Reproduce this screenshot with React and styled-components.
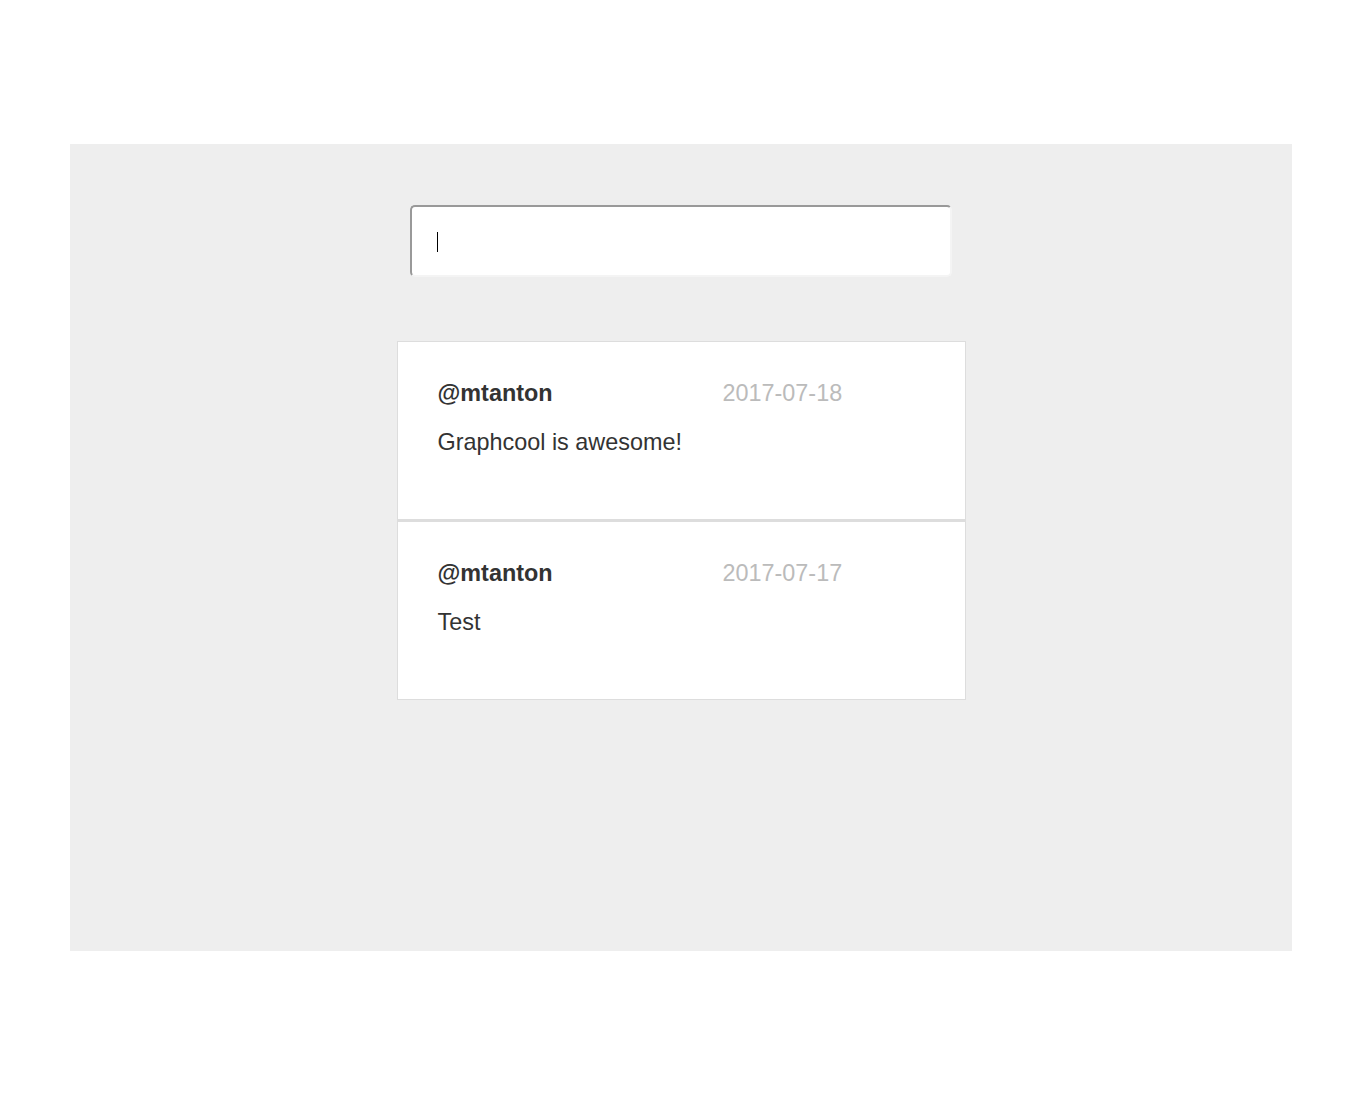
import React from 'react';
import styled, { createGlobalStyle } from 'styled-components';

const GlobalStyle = createGlobalStyle`
  body {
    margin: 0;
    background: #fff;
    font-family: "Liberation Sans", Arial, Helvetica, sans-serif;
  }
`;

const Page = styled.div`
  padding: 144px 0 142px 70px;
`;

const Panel = styled.div`
  background: #eee;
  width: 1222px;
  height: 807px;
  display: flex;
  flex-direction: column;
  align-items: center;
  padding-top: 61px;
  box-sizing: border-box;
`;

const SearchBox = styled.div`
  position: relative;
  width: 542px;
  height: 72px;
`;

const SearchInput = styled.input`
  box-sizing: border-box;
  width: 100%;
  height: 100%;
  padding: 0 24px;
  font-family: "Liberation Sans", Arial, sans-serif;
  font-size: 19px;
  color: #333;
  background: #fff;
  border-style: solid;
  border-width: 2px;
  border-color: #999 #f4f4f4 #f4f4f4 #999;
  border-radius: 5px;
  outline: none;
  caret-color: transparent;
`;

const Caret = styled.span`
  position: absolute;
  left: 27px;
  top: 27px;
  width: 1px;
  height: 20px;
  background: #000;
  pointer-events: none;
`;

const List = styled.div`
  margin-top: 64px;
  width: 569px;
  display: flex;
  flex-direction: column;
`;

const Card = styled.div`
  background: #fff;
  border: 1px solid #ddd;
  padding: 38px 40px 41px;
  color: #333;

  & + & {
    border-top-width: 2px;
  }
`;

const Header = styled.div`
  display: grid;
  grid-template-columns: 285px auto;
  font-size: 23.4px;
  line-height: 26px;
`;

const Handle = styled.span`
  font-weight: bold;
  color: #333;
`;

const Date = styled.span`
  color: #bbb;
`;

const Text = styled.p`
  margin: 23px 0;
  font-size: 23.4px;
  line-height: 26px;
  color: #333;
`;

const posts = [
  { id: 1, handle: 'mtanton', date: '2017-07-18', text: 'Graphcool is awesome!' },
  { id: 2, handle: 'mtanton', date: '2017-07-17', text: 'Test' },
];

const App = () => (
  <Page>
    <GlobalStyle />
    <Panel>
      <SearchBox>
        <SearchInput autoFocus />
        <Caret />
      </SearchBox>
      <List>
        {posts.map(post => (
          <Card key={post.id}>
            <Header>
              <Handle>@{post.handle}</Handle>
              <Date>{post.date}</Date>
            </Header>
            <Text>{post.text}</Text>
          </Card>
        ))}
      </List>
    </Panel>
  </Page>
);

export default App;
